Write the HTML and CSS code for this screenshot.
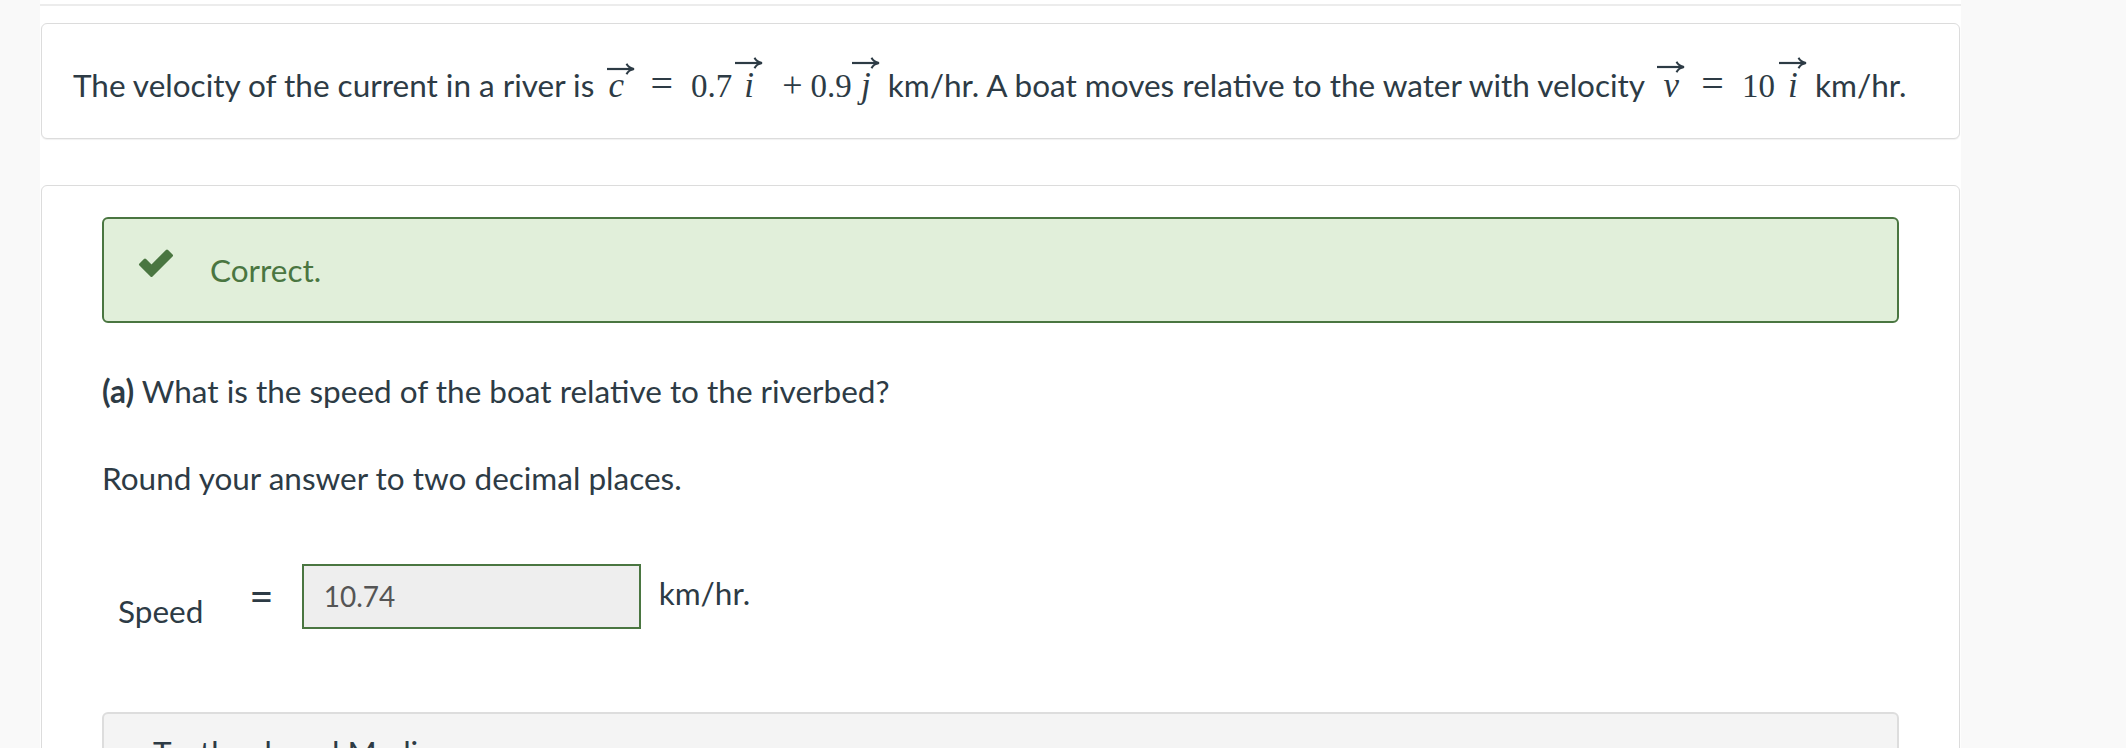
FILE: index.html
```html
<!DOCTYPE html>
<html lang="en">
<head>
<meta charset="utf-8">
<title>Question</title>
<link rel="stylesheet" href="styles.css">
</head>
<body>
<div class="main">
  <div class="rule"></div>
  <div class="card card-stem">
    <p class="stem">The velocity of the current in a river is <span class="math m1"><span class="vec vec-c"><svg class="arrow" width="28" height="12" viewBox="0 0 28 12"><path d="M0 6H26" stroke="#2d3b45" stroke-width="2.2" fill="none"/><path d="M19.5 0.8Q21.5 5 27 6Q21.5 7 19.5 11.2" stroke="#2d3b45" stroke-width="2" fill="none"/></svg><i>c</i></span><span class="op eq1">=</span><span class="num">0.7</span><span class="vec vec-i1"><svg class="arrow" width="28" height="12" viewBox="0 0 28 12"><path d="M0 6H26" stroke="#2d3b45" stroke-width="2.2" fill="none"/><path d="M19.5 0.8Q21.5 5 27 6Q21.5 7 19.5 11.2" stroke="#2d3b45" stroke-width="2" fill="none"/></svg><i>i</i></span><span class="op plus">+</span><span class="num">0.9</span><span class="vec vec-j"><svg class="arrow" width="28" height="12" viewBox="0 0 28 12"><path d="M0 6H26" stroke="#2d3b45" stroke-width="2.2" fill="none"/><path d="M19.5 0.8Q21.5 5 27 6Q21.5 7 19.5 11.2" stroke="#2d3b45" stroke-width="2" fill="none"/></svg><i>j</i></span></span> km/hr. A boat moves relative to the water with velocity <span class="math m2"><span class="vec vec-v"><svg class="arrow" width="28" height="12" viewBox="0 0 28 12"><path d="M0 6H26" stroke="#2d3b45" stroke-width="2.2" fill="none"/><path d="M19.5 0.8Q21.5 5 27 6Q21.5 7 19.5 11.2" stroke="#2d3b45" stroke-width="2" fill="none"/></svg><i>v</i></span><span class="op eq2">=</span><span class="num">10</span><span class="vec vec-i2"><svg class="arrow" width="28" height="12" viewBox="0 0 28 12"><path d="M0 6H26" stroke="#2d3b45" stroke-width="2.2" fill="none"/><path d="M19.5 0.8Q21.5 5 27 6Q21.5 7 19.5 11.2" stroke="#2d3b45" stroke-width="2" fill="none"/></svg><i>i</i></span></span> km/hr.</p>
  </div>

  <div class="card card-q">
    <div class="alert">
      <svg class="check" width="38" height="30" viewBox="0 0 38 30"><path d="M3.5 15.5L8 11L14.5 17.5L30 2L34.5 6.5L14.5 26.5Z" fill="#4a7641" stroke="#4a7641" stroke-width="3" stroke-linejoin="round"/></svg>
      <span class="alert-text">Correct.</span>
    </div>
    <p class="q"><b>(a)</b> What is the speed of the boat relative to the riverbed?</p>
    <p class="round">Round your answer to two decimal places.</p>
    <div class="answer-row">
      <span class="label">Speed</span>
      <span class="eq">=</span>
      <div class="input">10.74</div>
      <span class="unit">km/hr.</span>
    </div>
    <div class="media">
      <div class="media-title">Textbook and Media</div>
    </div>
  </div>
</div>
</body>
</html>
```
FILE: styles.css
```css
html, body {
  margin: 0;
  padding: 0;
  overflow: hidden;
}
body {
  background: #f9f9f9;
  font-family: Lato, "Open Sans", sans-serif;
  color: #2d3b45;
}
.main {
  margin-left: 40px;
  width: 1921px;
  min-height: 748px;
  background: #ffffff;
  padding-top: 4px;
  box-sizing: border-box;
}
.rule {
  height: 2px;
  background: #ececec;
}
.card {
  margin: 0 1px;
  border: 1px solid #dcdcdc;
  border-radius: 6px;
  background: #fff;
  box-shadow: 0 1px 1px rgba(0,0,0,0.06);
}
.card-stem {
  margin-top: 17px;
  padding: 37px 31px 28px;
}
.stem {
  margin: 0;
  font-size: 31.5px;
  line-height: 48px;
  white-space: nowrap;
}
.math {
  font-family: "Liberation Serif", "Times New Roman", serif;
  font-size: 33px;
}
.m1 { margin-left: 5px; }
.m2 { margin-left: 5px; }
.vec {
  display: inline-block;
  position: relative;
  width: 28px;
  text-align: center;
  line-height: 1;
}
.vec i {
  font-style: italic;
  font-size: 35px;
}
.arrow {
  position: absolute;
  left: 0;
  top: -11px;
}
.vec-c { text-align: left; padding-left: 1px; }
.vec-c .arrow { top: -5px; }
.vec-v .arrow { top: -7px; }
.vec-i1 { margin-left: 3px; }
.op {
  display: inline-block;
  font-size: 40px;
  line-height: 1;
}
.eq1 { margin: 0 18px 0 14px; }
.plus { margin: 0 8px 0 19px; font-size: 36px; }
.eq2 { margin: 0 18px 0 16px; }
.vec-i2 { margin-left: 4px; }

.card-q {
  margin-top: 46px;
  padding: 31px 60px 0;
  min-height: 700px;
}
.alert {
  border: 2px solid #4a7641;
  border-radius: 6px;
  background: #e1efda;
  padding: 27px 33px;
  display: flex;
  align-items: flex-start;
  gap: 35px;
}
.check {
  margin-top: 3px;
  flex: none;
}
.alert-text {
  font-size: 31.5px;
  line-height: 48px;
  color: #4a7641;
}
.q, .round {
  margin: 0;
  font-size: 31.5px;
  line-height: 48px;
}
.q { margin-top: 44px; }
.q b { font-weight: 700; }
.round { margin-top: 39px; }
.answer-row {
  margin-top: 62px;
  display: flex;
  align-items: flex-start;
  height: 65px;
}
.label {
  margin-left: 16px;
  margin-top: 23px;
  font-size: 31.5px;
  line-height: 48px;
}
.eq {
  margin-left: 46px;
  margin-right: 28px;
  font-size: 42px;
  line-height: 56px;
  margin-top: 3px;
  color: #2d3b45;
}
.input {
  width: 339px;
  height: 65px;
  box-sizing: border-box;
  border: 2px solid #4a7641;
  background: #eeeeee;
  padding-left: 20px;
  font-size: 28px;
  line-height: 61px;
  color: #555555;
}
.unit {
  margin-left: 18px;
  margin-top: 5px;
  font-size: 31.5px;
  line-height: 48px;
}
.media {
  margin-top: 83px;
  border: 2px solid #dddddd;
  border-radius: 6px;
  background: #f4f4f4;
  padding: 14px 0 20px 49px;
}
.media-title {
  font-size: 31.5px;
  line-height: 48px;
}
```
